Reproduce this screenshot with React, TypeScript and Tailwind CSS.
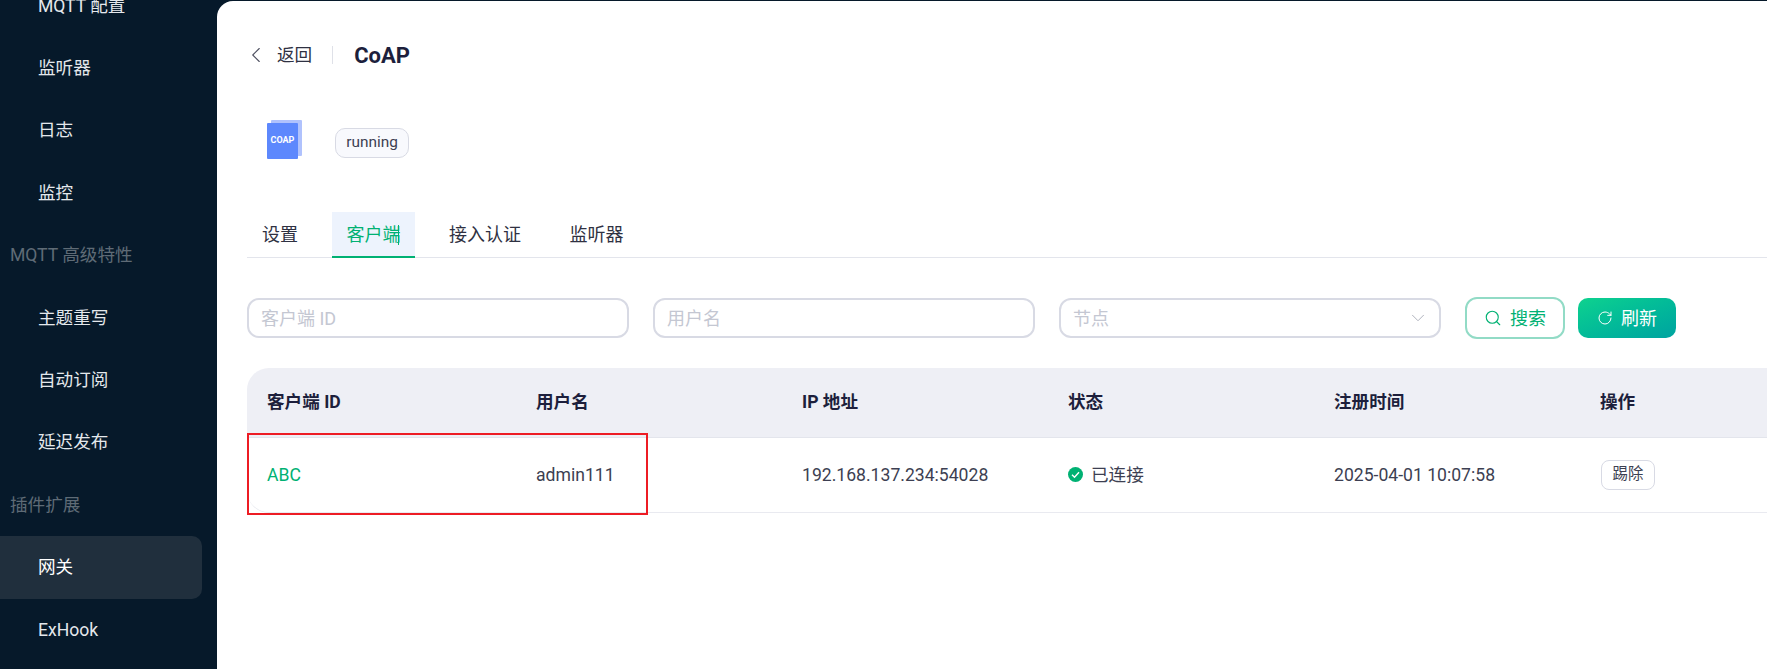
import React from "react";
import { ChevronLeft, ChevronDown, Search, RotateCw } from "lucide-react";

function NavItem({ label, active }: { label: string; active?: boolean }) {
  return (
    <div className={`flex h-[62.4px] items-center pl-[38px] text-[17.6px] ${active ? "mr-[15px] rounded-r-[10px] bg-[#202f3d] text-white" : "text-[#e4e8ec]"}`}>
      {label}
    </div>
  );
}

function NavGroup({ label }: { label: string }) {
  return <div className="flex h-[62.4px] items-center pl-[10px] text-[17.6px] text-[#5f6b76]">{label}</div>;
}

function Field({ placeholder, select }: { placeholder: string; select?: boolean }) {
  return (
    <div className="flex h-[40px] flex-1 items-center justify-between rounded-[12px] border-2 border-[#d8dae4] bg-white pl-[12px] pr-[10px] text-[18px] text-[#c4c7d2]">
      <span>{placeholder}</span>
      {select && <ChevronDown size={22} strokeWidth={1} className="text-[#a9acb8]" />}
    </div>
  );
}

const cols = ["w-[269px]", "w-[266px]", "w-[266px]", "w-[266px]", "w-[266px]", "w-[190px]"];

export default function App() {
  return (
    <div className="flex h-[669px] w-[1767px] overflow-hidden bg-[#06192a] font-['Roboto','Noto_Sans_CJK_SC',sans-serif]">
      <aside className="w-[217px] shrink-0 overflow-hidden">
        <div className="-mt-[25.4px]">
          <NavItem label="MQTT 配置" />
          <NavItem label="监听器" />
          <NavItem label="日志" />
          <NavItem label="监控" />
          <NavGroup label="MQTT 高级特性" />
          <NavItem label="主题重写" />
          <NavItem label="自动订阅" />
          <NavItem label="延迟发布" />
          <NavGroup label="插件扩展" />
          <NavItem label="网关" active />
          <NavItem label="ExHook" />
        </div>
      </aside>

      <main className="relative mt-px flex-1 overflow-hidden rounded-tl-[16px] bg-white pl-[30px]">
        <div className="flex h-[108px] items-center text-[#1d1f3c]">
          <ChevronLeft size={26} strokeWidth={1} className="-ml-[4px] text-[#4e5060]" />
          <span className="ml-[8px] text-[17.6px] text-[#2f3142]">返回</span>
          <span className="ml-[20px] h-[18px] w-px bg-[#dfe1e8]" />
          <span className="ml-[21px] text-[22px] font-bold">CoAP</span>
        </div>

        <div className="mt-[10px] flex h-[40px] items-center pl-[20px]">
          <div className="relative h-[39px] w-[35px]">
            <div className="absolute right-0 top-0 h-[36px] w-[31px] rounded-[1px] bg-[#b0c2fd]" />
            <div className="absolute bottom-0 left-0 flex h-[36px] w-[31px] items-center justify-center rounded-[1px] bg-[#5d88fd] text-[9px] font-bold text-white">COAP</div>
          </div>
          <div className="ml-[33px] mt-[7px] flex h-[30px] w-[74px] items-center justify-center rounded-[10px] border border-[#d8dae4] bg-[#f8f9fd] text-[15.4px] text-[#3d3f52]">running</div>
        </div>

        <div className="mt-[53px] flex h-[46px] gap-[19px] border-b border-[#e3e5ec] text-[18px] text-[#2f3142]">
          <div className="flex w-[66px] items-center justify-center">设置</div>
          <div className="relative -mb-px flex w-[83px] items-center justify-center border-b-2 border-[#00b173] bg-[#edf3fd] text-[#00b173]">
            客户端
            <span className="absolute left-[66px] top-[13px] h-[20px] w-px bg-[#00b173]" />
          </div>
          <div className="ml-px flex w-[100px] items-center justify-center">接入认证</div>
          <div className="ml-px flex w-[83px] items-center justify-center">监听器</div>
        </div>

        <div className="mt-[39px] flex h-[42px] items-center">
          <div className="flex w-[1194px] gap-[24px]">
            <Field placeholder="客户端 ID" />
            <Field placeholder="用户名" />
            <Field placeholder="节点" select />
          </div>
          <button className="ml-[24px] flex h-[42px] w-[100px] items-center justify-center gap-[8px] rounded-[12px] border-2 border-[#92dbc6] bg-white text-[18px] text-[#00b173]">
            <Search size={18} strokeWidth={1.5} />
            搜索
          </button>
          <button className="ml-[13px] flex h-[40px] w-[98px] items-center justify-center gap-[8px] rounded-[10px] bg-gradient-to-br from-[#0fd28e] to-[#00a3a0] text-[18px] text-white">
            <RotateCw size={16} strokeWidth={1.5} />
            刷新
          </button>
        </div>

        <div className="mt-[29px] w-[1560px]">
          <div className="flex h-[70px] items-center rounded-tl-[22px] border-b border-[#e3e5ec] bg-[#eeeff5] pl-[20px] text-[17.6px] font-bold text-[#1d1f3c]">
            {["客户端 ID", "用户名", "IP 地址", "状态", "注册时间", "操作"].map((t, i) => (
              <div key={t} className={cols[i]}>{t}</div>
            ))}
          </div>
          <div className="flex h-[75px] items-center rounded-bl-[22px] border-b border-[#e9eaf0] pl-[20px] text-[17.6px] text-[#3d3f52]">
            <div className={`${cols[0]} text-[#00b173]`}>ABC</div>
            <div className={cols[1]}>admin111</div>
            <div className={cols[2]}>192.168.137.234:54028</div>
            <div className={`${cols[3]} flex items-center gap-[8px]`}>
              <svg width="15" height="15" viewBox="0 0 15 15">
                <circle cx="7.5" cy="7.5" r="7.5" fill="#00b173" />
                <path d="M4 7.8l2.5 2.5L11 5.3" fill="none" stroke="#fff" strokeWidth="1.4" />
              </svg>
              已连接
            </div>
            <div className={cols[4]}>2025-04-01 10:07:58</div>
            <div className={`${cols[5]} pl-px`}>
              <span className="flex h-[30px] w-[54px] items-center justify-center rounded-[8px] border border-[#d8dae4] text-[15.4px]">踢除</span>
            </div>
          </div>
        </div>

        <div className="absolute left-[30px] top-[432px] h-[82px] w-[401px] border-2 border-[#ed1c24]" />
      </main>
    </div>
  );
}
